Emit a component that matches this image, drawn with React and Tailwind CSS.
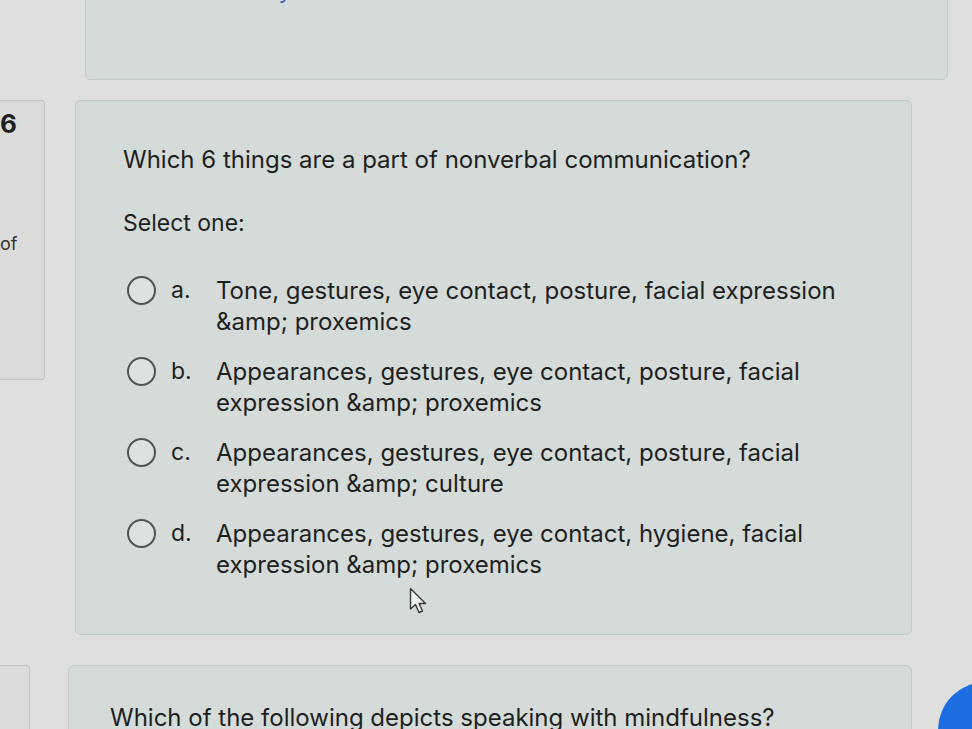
import React from "react";

const options = [
    { key: "a.", text: "Tone, gestures, eye contact, posture, facial expression &amp; proxemics" },
    { key: "b.", text: "Appearances, gestures, eye contact, posture, facial expression &amp; proxemics" },
    { key: "c.", text: "Appearances, gestures, eye contact, posture, facial expression &amp; culture" },
    { key: "d.", text: "Appearances, gestures, eye contact, hygiene, facial expression &amp; proxemics" },
];

function Cursor() {
    return (
        <svg width="20" height="28" viewBox="0 0 20 28" className="absolute left-[333px] top-[486px]">
            <path d="M1.5 1.5 L1.5 22 L6.5 17.5 L10 25.5 L13.5 24 L10 16.5 L16.5 16.5 Z" fill="#f2f3f1" stroke="#3a3a3a" strokeWidth="1.4" strokeLinejoin="round" />
        </svg>
    );
}

export default function App() {
    return (
        <div
            className="relative h-[729px] w-[972px] overflow-hidden bg-[#dfe0dd] text-[#1e1f1f]"
            style={{ fontFamily: 'Inter, "Liberation Sans", Arial, sans-serif' }}
        >
            {/* previous question, cut off at the top */}
            <div className="ml-[85px] -mt-[40px] h-[120px] w-[863px] rounded-md border border-[#c3ccc8] bg-[#d5dbd8] pl-[105px] pt-[14px]">
                <span className="text-[24px] leading-[30px] text-[#3f6fc0]">Clear my choice</span>
            </div>

            <div className="mt-[20px] flex items-start">
                {/* info block */}
                <div className="h-[280px] w-[45px] shrink-0 rounded-r-sm border border-l-0 border-[#c4c5c3] bg-[#dcdddb] pt-[8px]">
                    <div className="text-[26px] font-bold leading-[30px]">6</div>
                    <div className="mt-[93px] text-[18px] leading-[24px] text-[#333]">of</div>
                </div>

                {/* current question */}
                <div className="relative ml-[30px] h-[535px] w-[837px] rounded-md border border-[#c0cbc6] bg-[#d4dbd8] pl-[47px] pt-[44px]">
                    <p className="text-[24px] leading-[30px]">Which 6 things are a part of nonverbal communication?</p>
                    <p className="mt-[33px] text-[23px] leading-[30px]">Select one:</p>

                    <div className="mt-[37px] flex flex-col gap-[19px]">
                        {options.map((o) => (
                            <div key={o.key} className="flex items-start pl-[4px]">
                                <span className="mt-[1px] h-[29px] w-[29px] shrink-0 rounded-full border-[2.5px] border-[#515453] bg-[#dde2e0]" />
                                <span className="ml-[15px] w-[45px] shrink-0 text-[23px] leading-[31px]">{o.key}</span>
                                <span className="w-[660px] text-[24px] leading-[31px]">{o.text}</span>
                            </div>
                        ))}
                    </div>

                    <Cursor />
                </div>
            </div>

            <div className="mt-[30px] flex items-start">
                <div className="h-[120px] w-[30px] shrink-0 rounded-r-sm border border-l-0 border-[#c4c5c3] bg-[#dcdddb]" />
                <div className="ml-[38px] h-[120px] w-[844px] rounded-md border border-[#c0cbc6] bg-[#d4dbd8] pl-[41px] pt-[37px]">
                    <p className="text-[24px] leading-[30px]">Which of the following depicts speaking with mindfulness?</p>
                </div>
            </div>

            {/* floating help button */}
            <div className="absolute left-[938px] top-[682px] h-[96px] w-[96px] rounded-full bg-[#1d6ee0]" />
        </div>
    );
}
